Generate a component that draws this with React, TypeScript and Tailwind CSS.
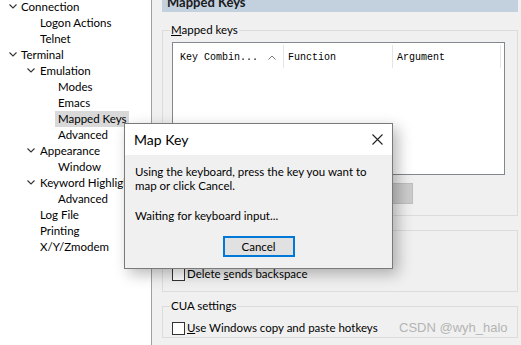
import React from 'react';

const ui = { fontFamily: 'Lato, "Noto Sans", Arial, sans-serif' };
const mono = { fontFamily: '"Liberation Mono", "DejaVu Sans Mono", monospace' };

type Node = { label: string; depth: number; open?: boolean; selected?: boolean };

const tree: Node[] = [
  { label: 'Connection', depth: 0, open: true },
  { label: 'Logon Actions', depth: 1 },
  { label: 'Telnet', depth: 1 },
  { label: 'Terminal', depth: 0, open: true },
  { label: 'Emulation', depth: 1, open: true },
  { label: 'Modes', depth: 2 },
  { label: 'Emacs', depth: 2 },
  { label: 'Mapped Keys', depth: 2, selected: true },
  { label: 'Advanced', depth: 2 },
  { label: 'Appearance', depth: 1, open: true },
  { label: 'Window', depth: 2 },
  { label: 'Keyword Highlight', depth: 1, open: true },
  { label: 'Advanced', depth: 2 },
  { label: 'Log File', depth: 1 },
  { label: 'Printing', depth: 1 },
  { label: 'X/Y/Zmodem', depth: 1 },
];

const indent = ['pl-[21px]', 'pl-[40px]', 'pl-[58px]'];
const chevronPos = ['left-[9px]', 'left-[27px]', 'left-[45px]'];

function Chevron() {
  return (
    <svg width="8" height="5" viewBox="0 0 8 5">
      <polyline points="0.5,0.5 4,4 7.5,0.5" fill="none" stroke="#333" strokeWidth="1.1" />
    </svg>
  );
}

function Checkbox() {
  return <span className="w-[13px] h-[13px] border border-[#333] bg-white shrink-0" />;
}

function Group({ label, className, children }: { label: React.ReactNode; className: string; children: React.ReactNode }) {
  return (
    <div className={`relative border border-[#dcdcdc] ${className}`}>
      <span className="absolute left-[7px] -top-[9px] bg-[#f0f0f0] px-[1px] text-[11.5px] leading-[16px] text-black whitespace-nowrap">
        {label}
      </span>
      {children}
    </div>
  );
}

export default function App() {
  return (
    <div className="relative w-[521px] h-[345px] overflow-hidden flex bg-[#f0f0f0] text-black" style={ui}>
      {/* tree */}
      <div className="w-[152px] shrink-0 bg-white border-r border-[#a0a0a0]">
        <div className="-mt-[1px]">
          {tree.map((n, i) => (
            <div key={i} className={`relative h-[16px] text-[11.5px] leading-[16px] whitespace-nowrap ${indent[n.depth]}`}>
              {n.open && (
                <span className={`absolute top-[5px] ${chevronPos[n.depth]}`}>
                  <Chevron />
                </span>
              )}
              <span className={n.selected ? 'bg-[#d9d9d9] -ml-[3px] px-[3px] inline-block h-[16px]' : ''}>
                {n.label}
              </span>
            </div>
          ))}
        </div>
      </div>

      {/* settings */}
      <div className="flex-1 pl-[10px] pr-[3px] flex flex-col">
        <div className="h-[12px] bg-[#c3d1df] overflow-hidden">
          <div className="pl-[5px] -mt-[6px] text-[13px] leading-[16px] font-bold text-[#1a1a1a]">Mapped Keys</div>
        </div>

        <Group className="mt-[18px] h-[186px] px-[9px] pt-[11px]" label={<><u>M</u>apped keys</>}>
          <div className="h-[133px] w-[333px] border border-[#828790] bg-white px-[1px] pt-[2px]">
            <div className="flex h-[23px] text-[10px] leading-[25px]" style={mono}>
              <div className="w-[110px] border-r border-[#e5e5e5] pl-[6px] flex items-center pt-[2px]">
                <span>Key Combin...</span>
                <svg className="ml-[10px]" width="8" height="5" viewBox="0 0 8 5">
                  <polyline points="0.5,4.5 4,1 7.5,4.5" fill="none" stroke="#777" strokeWidth="1" />
                </svg>
              </div>
              <div className="w-[109px] border-r border-[#e5e5e5] pl-[4px]">Function</div>
              <div className="w-[108px] border-r border-[#e5e5e5] pl-[4px]">Argument</div>
            </div>
          </div>
          {/* buttons, mostly under the dialog */}
          <div className="mt-[8px] flex gap-[8px]">
            <div className="w-[75px] h-[21px] border border-[#adadad] bg-[#e1e1e1]" />
            <div className="w-[75px] h-[21px] border border-[#bfbfbf] bg-[#cccccc]" />
            <div className="w-[75px] h-[21px] border border-[#bfbfbf] bg-[#cccccc]" />
          </div>
        </Group>

        <Group className="mt-[14px] h-[62px] px-[9px] pt-[36px]" label="">
          <div className="flex items-center gap-[2px] text-[11.5px] leading-[14px]">
            <Checkbox />
            <span>Delete <u>s</u>ends backspace</span>
          </div>
        </Group>

        <Group className="mt-[14px] h-[32px] px-[9px] pt-[14px]" label="CUA settings">
          <div className="flex items-center gap-[2px] text-[11.5px] leading-[14px]">
            <Checkbox />
            <span><u>U</u>se Windows copy and paste hotkeys</span>
          </div>
        </Group>
      </div>

      {/* watermark */}
      <div className="absolute left-[399px] top-[319px] text-[13px] leading-[18px] text-[#b4b4b4]" style={{ fontFamily: '"Liberation Sans", Arial, sans-serif' }}>
        CSDN @wyh_halo
      </div>

      {/* dialog */}
      <div className="absolute left-[124px] top-[123px] w-[269px] h-[146px] border border-[#7a7a7a] bg-[#f0f0f0] shadow-[5px_5px_14px_rgba(0,0,0,0.28)] flex flex-col">
        <div className="h-[31px] bg-white flex items-center justify-between pl-[9px] pr-[9px]">
          <span className="text-[14px]">Map Key</span>
          <svg width="11" height="11" viewBox="0 0 11 11">
            <path d="M0.5 0.5 L10.5 10.5 M10.5 0.5 L0.5 10.5" stroke="#222" strokeWidth="1.1" />
          </svg>
        </div>
        <div className="px-[10px] pt-[10px] text-[11.5px] leading-[14px] whitespace-nowrap">
          <div>Using the keyboard, press the key you want to</div>
          <div>map or click Cancel.</div>
          <div className="mt-[16px]">Waiting for keyboard input...</div>
        </div>
        <div className="mt-[13px] flex justify-center">
          <div className="w-[72px] h-[21px] border-[2px] border-[#0078d7] bg-[#e1e1e1] text-[11.5px] leading-[17px] text-center">
            Cancel
          </div>
        </div>
      </div>
    </div>
  );
}
